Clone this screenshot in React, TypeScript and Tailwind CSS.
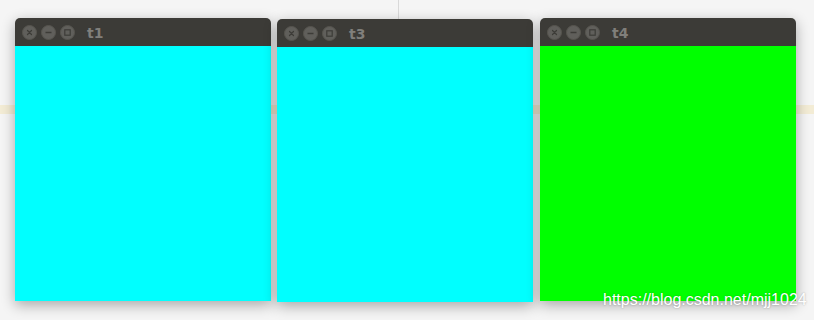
import React from "react";

type Win = { title: string; left: number; top: number; color: string };

const wins: Win[] = [
  { title: "t1", left: 15, top: 18, color: "#00ffff" },
  { title: "t3", left: 277, top: 19, color: "#00ffff" },
  { title: "t4", left: 540, top: 18, color: "#00ff00" },
];

function TitleButton({ kind }: { kind: "close" | "min" | "max" }) {
  return (
    <svg width="15" height="15" viewBox="0 0 15 15">
      <circle cx="7.5" cy="7.5" r="7" fill="#605f5b" stroke="#56554f" strokeWidth="1" />
      {kind === "close" && (
        <path d="M5.5 5.5 L9.5 9.5 M9.5 5.5 L5.5 9.5" stroke="#3d3c38" strokeWidth="1.2" strokeLinecap="round" />
      )}
      {kind === "min" && <path d="M4.5 7.5 H10.5" stroke="#3d3c38" strokeWidth="1.5" />}
      {kind === "max" && <rect x="4.8" y="4.8" width="5.4" height="5.4" fill="none" stroke="#3d3c38" strokeWidth="1.2" />}
    </svg>
  );
}

function Window({ w }: { w: Win }) {
  return (
    <div
      className="absolute w-[256px] flex flex-col shadow-[0_4px_14px_rgba(0,0,0,0.32)] rounded-t-[5px]"
      style={{ left: w.left, top: w.top }}
    >
      <div className="h-[28px] bg-[#3c3b37] rounded-t-[5px] flex items-center pl-[7px]">
        <div className="flex items-center gap-[4px]">
          <TitleButton kind="close" />
          <TitleButton kind="min" />
          <TitleButton kind="max" />
        </div>
        <span className="ml-[12px] mt-[2px] text-[14px] font-bold text-[#807f7b] leading-none font-['DejaVu_Sans',sans-serif]">
          {w.title}
        </span>
      </div>
      <div className="h-[255px]" style={{ background: w.color }} />
    </div>
  );
}

export default function App() {
  return (
    <div className="relative w-[814px] h-[320px] overflow-hidden bg-[#f5f5f5]">
      <div className="flex h-[24px]">
        <div className="w-[398px]" />
        <div className="w-px bg-[#d9d9d9]" />
        <div className="flex-1" />
      </div>
      <div className="absolute left-0 right-0 top-[105px] h-[9px] bg-[#f3ecd5]" />
      {wins.map((w) => (
        <Window key={w.title} w={w} />
      ))}
      <div className="absolute left-[603px] top-[288px] text-[16px] text-white font-['Liberation_Sans',Arial,sans-serif] [text-shadow:0_0_2px_rgba(0,0,0,0.3)]">
        https://blog.csdn.net/mjj1024
      </div>
    </div>
  );
}
